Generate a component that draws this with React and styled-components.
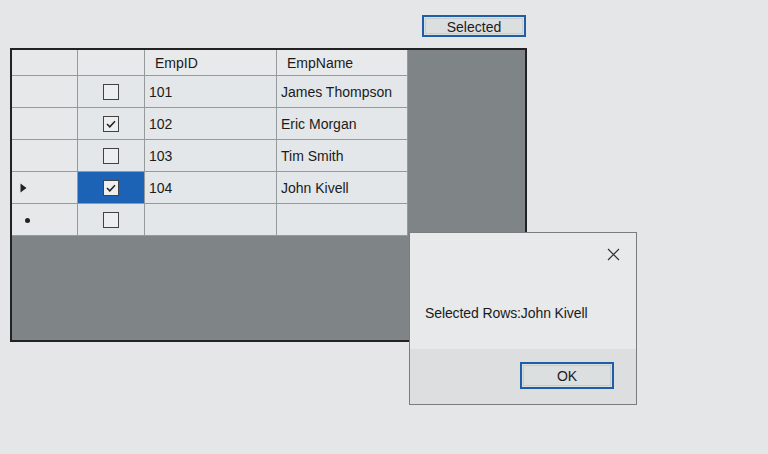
import React from "react";
import styled, { createGlobalStyle } from "styled-components";

const Global = createGlobalStyle`
  html, body { margin: 0; padding: 0; }
  body {
    background: #e4e6e7;
    font-family: "Liberation Sans", Arial, sans-serif;
    color: #1b1b1b;
    width: 768px;
    height: 454px;
    overflow: hidden;
  }
`;

const Page = styled.div`
  position: relative;
  width: 768px;
  height: 454px;
  padding: 15px 0 0 10px;
  box-sizing: border-box;
  display: flex;
  flex-direction: column;
`;

const Toolbar = styled.div`
  display: flex;
  height: 22px;
  padding-left: 412px;
`;

const PushButton = styled.button`
  width: ${(p) => p.$w}px;
  height: ${(p) => p.$h}px;
  box-sizing: border-box;
  border: 2px solid #1d5fa6;
  background: #dcdfe0;
  font-family: "Liberation Sans", Arial, sans-serif;
  font-size: 14px;
  color: #1b1b1b;
  padding: 1px 0 0;
  display: flex;
  align-items: center;
  justify-content: center;
  outline: 1px solid #c8ccd0;
  outline-offset: -4px;
`;

const GridFrame = styled.div`
  margin-top: 11px;
  width: 517px;
  height: 294px;
  box-sizing: border-box;
  border: 2px solid #222;
  background: #7f8486;
`;

const Table = styled.div`
  display: grid;
  grid-template-columns: 66px 67px 132px 131px;
  grid-template-rows: 26px repeat(5, 32px);
  width: 396px;
`;

const Cell = styled.div`
  box-sizing: border-box;
  border-right: 1px solid #959a9d;
  border-bottom: 1px solid #959a9d;
  background: ${(p) => (p.$selected ? "#1c63b5" : p.$head ? "#e8e9ea" : "#e3e7e9")};
  font-size: 14px;
  display: flex;
  align-items: center;
  justify-content: ${(p) => (p.$center ? "center" : "flex-start")};
  padding-left: ${(p) => (p.$center ? 0 : p.$head ? 10 : 4)}px;
  padding-top: 1px;
  white-space: nowrap;
  overflow: hidden;
`;

const RowHead = styled(Cell)`
  background: #e6e8e9;
  padding-left: 8px;
`;

const Box = styled.span`
  width: 16px;
  height: 16px;
  box-sizing: border-box;
  border: 1.5px solid #404244;
  background: #eceef0;
  display: flex;
  align-items: center;
  justify-content: center;
  margin-left: -1px;
`;

const Dot = styled.span`
  width: 5px;
  height: 5px;
  border-radius: 50%;
  background: #222;
  margin-left: 5px;
`;

const Dialog = styled.div`
  position: absolute;
  left: 409px;
  top: 232px;
  width: 228px;
  height: 173px;
  box-sizing: border-box;
  border: 1px solid #7a7c7e;
  background: #e7e9ea;
  display: flex;
  flex-direction: column;
`;

const DialogTop = styled.div`
  height: 42px;
  display: flex;
  justify-content: flex-end;
  align-items: center;
  padding-right: 16px;
`;

const DialogBody = styled.div`
  flex: 1;
  font-size: 14px;
  padding: 30px 0 0 15px;
  letter-spacing: -0.1px;
`;

const DialogFooter = styled.div`
  height: 55px;
  background: #dcdedf;
  display: flex;
  justify-content: flex-end;
  align-items: flex-start;
  padding: 13px 22px 0 0;
  box-sizing: border-box;
`;

const Check = () => (
  <svg width="12" height="12" viewBox="0 0 12 12">
    <path d="M2 6 L4.8 8.8 L10 3.2" fill="none" stroke="#222" strokeWidth="1.5" />
  </svg>
);

const Arrow = () => (
  <svg width="7" height="10" viewBox="0 0 7 10">
    <path d="M0.5 0.5 L6.5 5 L0.5 9.5 Z" fill="#222" />
  </svg>
);

const rows = [
  { id: "101", name: "James Thompson", checked: false },
  { id: "102", name: "Eric Morgan", checked: true },
  { id: "103", name: "Tim Smith", checked: false },
  { id: "104", name: "John Kivell", checked: true, current: true },
  { id: "", name: "", checked: false, isNew: true },
];

export default function App() {
  return (
    <>
      <Global />
      <Page>
        <Toolbar>
          <PushButton $w={104} $h={22}>Selected</PushButton>
        </Toolbar>
        <GridFrame>
          <Table>
            <RowHead $head />
            <Cell $head />
            <Cell $head>EmpID</Cell>
            <Cell $head>EmpName</Cell>
            {rows.map((r, i) => (
              <React.Fragment key={i}>
                <RowHead>
                  {r.current ? <Arrow /> : r.isNew ? <Dot /> : null}
                </RowHead>
                <Cell $center $selected={r.current}>
                  <Box>{r.checked ? <Check /> : null}</Box>
                </Cell>
                <Cell>{r.id}</Cell>
                <Cell>{r.name}</Cell>
              </React.Fragment>
            ))}
          </Table>
        </GridFrame>
        <Dialog>
          <DialogTop>
            <svg width="13" height="13" viewBox="0 0 13 13">
              <path d="M1 1 L12 12 M12 1 L1 12" stroke="#333" strokeWidth="1.2" />
            </svg>
          </DialogTop>
          <DialogBody>Selected Rows:John Kivell</DialogBody>
          <DialogFooter>
            <PushButton $w={94} $h={27}>OK</PushButton>
          </DialogFooter>
        </Dialog>
      </Page>
    </>
  );
}
